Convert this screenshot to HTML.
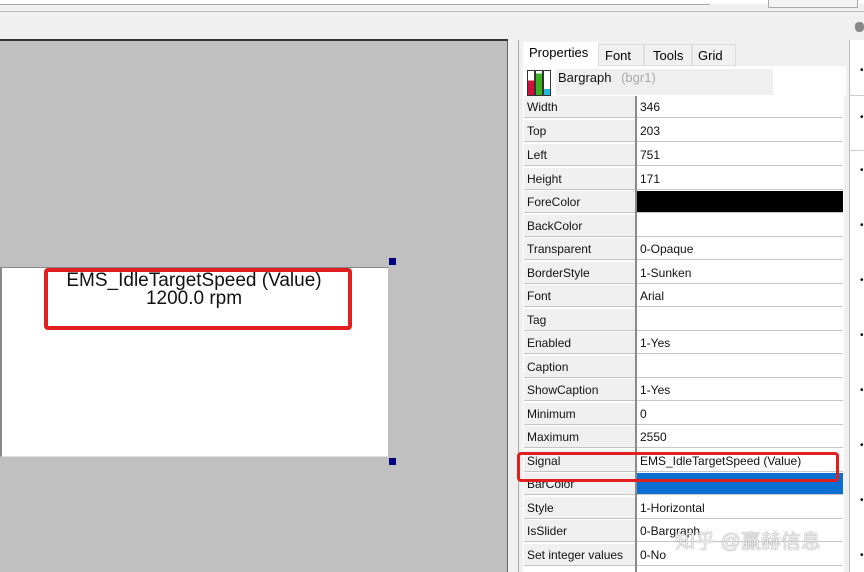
<!DOCTYPE html>
<html><head><style>
body{margin:0;width:864px;height:572px;position:relative;overflow:hidden;background:#f0f0f0;font-family:"Liberation Sans","DejaVu Sans",sans-serif;}
.a{position:absolute;}
.lbl{position:absolute;left:524px;width:111px;height:22px;background:#f0f0f0;border-bottom:1.5px solid #c4c4c4;font-size:12px;line-height:22px;padding-left:3px;box-sizing:border-box;color:#111;}
.val{position:absolute;left:637px;width:206px;height:22px;background:#fff;border-bottom:1.5px solid #c8c8c8;font-size:12px;line-height:22px;padding-left:3px;box-sizing:border-box;color:#111;}
</style></head><body>
<div class="a" style="left:0;top:0;width:864px;height:4px;background:#fff"></div>
<div class="a" style="left:0;top:4px;width:710px;height:1px;background:#aaa"></div>
<div class="a" style="left:0;top:11px;width:864px;height:1px;background:#bbb"></div>
<div class="a" style="left:768px;top:0;width:88px;height:7px;border:1px solid #aaa;border-top:none;background:#f4f4f4"></div>
<div class="a" style="left:0;top:39px;width:508px;height:2px;background:#333"></div>
<div class="a" style="left:0;top:41px;width:508px;height:531px;background:#c0c0c0"></div>
<div class="a" style="left:507px;top:41px;width:1px;height:531px;background:#666"></div>
<div class="a" style="left:0;top:267px;width:388px;height:190px;background:#fff;border-top:1px solid #888;border-left:2px solid #888;border-bottom:1px solid #ddd;box-sizing:border-box"></div>
<div class="a" style="left:389px;top:258px;width:7px;height:7px;background:#000080"></div>
<div class="a" style="left:389px;top:458px;width:7px;height:7px;background:#000080"></div>
<div class="a" style="left:0;top:272px;width:388px;text-align:center;font-size:19px;line-height:18px;color:#111;margin-left:0px">EMS_IdleTargetSpeed (Value)<br>1200.0 rpm</div>
<div class="a" style="left:44px;top:268px;width:308px;height:62px;border:4px solid #e02020;border-radius:4px;box-sizing:border-box"></div>
<!-- panel -->
<div class="a" style="left:518px;top:40px;width:331px;height:532px;background:#f0f0f0;border-left:1px solid #aaa"></div>
<div class="a" style="left:523px;top:42px;width:75px;height:24px;background:#fff;font-size:13px;line-height:22px;padding-left:6px;box-sizing:border-box">Properties</div>
<div class="a" style="left:598px;top:44px;width:46px;height:22px;background:#f0f0f0;border:1px solid #ddd;font-size:13px;line-height:22px;padding-left:6px;box-sizing:border-box">Font</div>
<div class="a" style="left:644px;top:44px;width:48px;height:22px;border:1px solid #ddd;font-size:13px;line-height:22px;padding-left:8px;box-sizing:border-box">Tools</div>
<div class="a" style="left:692px;top:44px;width:44px;height:22px;border:1px solid #ddd;font-size:13px;line-height:22px;padding-left:5px;box-sizing:border-box">Grid</div>
<div class="a" style="left:523px;top:66px;width:323px;height:30px;background:#fff"></div>
<div class="a" style="left:556px;top:69px;width:217px;height:26px;background:#efefef"></div>
<div class="a" style="left:527px;top:70px;width:6px;height:24px;border:1px solid #333;background:linear-gradient(#fff 40%,#d0103a 40%)"></div>
<div class="a" style="left:535px;top:70px;width:6px;height:24px;border:1px solid #333;background:linear-gradient(#fff 10%,#3cb020 10%)"></div>
<div class="a" style="left:543px;top:70px;width:6px;height:24px;border:1px solid #333;background:linear-gradient(#fff 75%,#20b8d8 75%)"></div>
<div class="a" style="left:558px;top:70px;font-size:13px;color:#111">Bargraph <span style="color:#aaa;margin-left:6px">(bgr1)</span></div>
<div class="a" style="left:523px;top:96px;width:321px;height:476px;background:#fff"></div>
<div class="a" style="left:635px;top:96px;width:2px;height:476px;background:#8a8a8a"></div>
<div class="lbl" style="top:96px">Width</div><div class="val" style="top:96px">346</div>
<div class="lbl" style="top:120px">Top</div><div class="val" style="top:120px">203</div>
<div class="lbl" style="top:144px">Left</div><div class="val" style="top:144px">751</div>
<div class="lbl" style="top:168px">Height</div><div class="val" style="top:168px">171</div>
<div class="lbl" style="top:191px">ForeColor</div><div class="val" style="top:191px;background:#000"></div>
<div class="lbl" style="top:215px">BackColor</div><div class="val" style="top:215px"></div>
<div class="lbl" style="top:238px">Transparent</div><div class="val" style="top:238px">0-Opaque</div>
<div class="lbl" style="top:262px">BorderStyle</div><div class="val" style="top:262px">1-Sunken</div>
<div class="lbl" style="top:285px">Font</div><div class="val" style="top:285px">Arial</div>
<div class="lbl" style="top:309px">Tag</div><div class="val" style="top:309px"></div>
<div class="lbl" style="top:332px">Enabled</div><div class="val" style="top:332px">1-Yes</div>
<div class="lbl" style="top:356px">Caption</div><div class="val" style="top:356px"></div>
<div class="lbl" style="top:379px">ShowCaption</div><div class="val" style="top:379px">1-Yes</div>
<div class="lbl" style="top:403px">Minimum</div><div class="val" style="top:403px">0</div>
<div class="lbl" style="top:426px">Maximum</div><div class="val" style="top:426px">2550</div>
<div class="lbl" style="top:450px">Signal</div><div class="val" style="top:450px">EMS_IdleTargetSpeed (Value)</div>
<div class="lbl" style="top:473px">BarColor</div><div class="val" style="top:473px;background:#0a6fd0"></div>
<div class="lbl" style="top:497px">Style</div><div class="val" style="top:497px">1-Horizontal</div>
<div class="lbl" style="top:520px">IsSlider</div><div class="val" style="top:520px">0-Bargraph</div>
<div class="lbl" style="top:544px">Set integer values</div><div class="val" style="top:544px">0-No</div>
<div class="a" style="left:517px;top:452px;width:322px;height:30px;border:3px solid #e02020;border-radius:4px;box-sizing:border-box"></div>
<div class="a" style="left:675px;top:525px;font-size:20px;color:rgba(255,255,255,0.85);font-family:'Liberation Sans','Noto Sans CJK SC',sans-serif;text-shadow:0 0 1px #555">知乎 @赢赫信息</div>
<!-- right strip -->
<div class="a" style="left:849px;top:40px;width:15px;height:532px;background:#fff;border-left:1px solid #bbb"></div>
<div class="a" style="left:855px;top:22px;width:9px;height:10px;background:#888;border-radius:4px"></div>
<div class="a" style="left:849px;top:95px;width:15px;height:1px;background:#ccc"></div>
<div class="a" style="left:849px;top:150px;width:15px;height:1px;background:#ccc"></div>
<div class="a" style="left:860px;top:65px;font-size:10px">•</div>
<div class="a" style="left:860px;top:112px;font-size:10px">•</div>
<div class="a" style="left:860px;top:165px;font-size:10px">•</div>
<div class="a" style="left:860px;top:220px;font-size:10px">•</div>
<div class="a" style="left:860px;top:275px;font-size:10px">•</div>
<div class="a" style="left:860px;top:330px;font-size:10px">•</div>
<div class="a" style="left:860px;top:385px;font-size:10px">•</div>
<div class="a" style="left:860px;top:440px;font-size:10px">•</div>
<div class="a" style="left:860px;top:495px;font-size:10px">•</div>
<div class="a" style="left:860px;top:550px;font-size:10px">•</div>
</body></html>
